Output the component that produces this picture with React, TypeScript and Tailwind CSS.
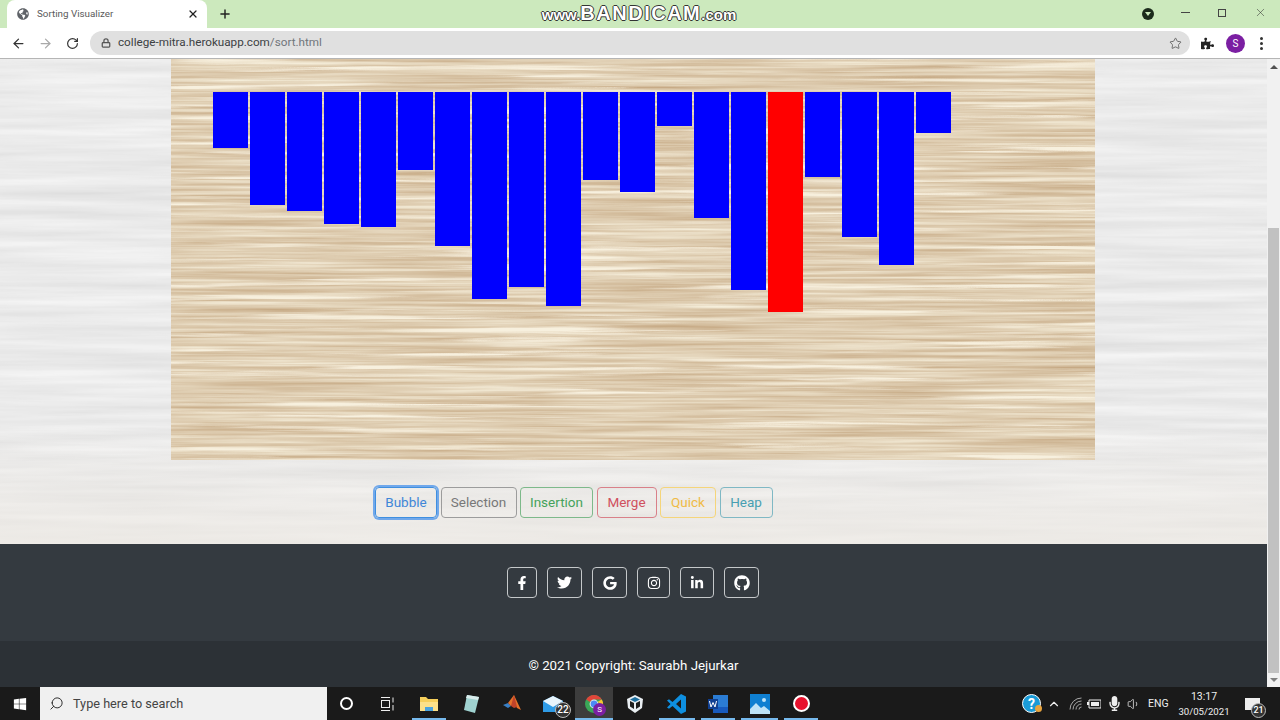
import { ArrowLeft, ArrowRight, ChevronUp, Lock, Plus, RotateCw, Search, Star, Volume1, X } from 'lucide-react';
import { ReactNode } from 'react';
import {
  FaFacebookF,
  FaGithub,
  FaGlobeAmericas,
  FaGoogle,
  FaInstagram,
  FaLinkedinIn,
  FaMicrophone,
  FaPuzzlePiece,
  FaTwitter,
  FaWindows,
} from 'react-icons/fa';

// bottom edge of each bar, measured from the top of the window
const bars = [148, 205, 211, 224, 227, 170, 246, 299, 287, 306, 180, 192, 126, 218, 290, 312, 177, 237, 265, 133];
const activeBar = 15;

const sortButtons = [
  { label: 'Bubble', cls: 'w-[62px] border-[#3f8fe0] text-[#3f86d8] shadow-[0_0_0_2px_rgba(60,140,235,0.7)]' },
  { label: 'Selection', cls: 'w-[76px] border-[#9c9c9c] text-[#787878]' },
  { label: 'Insertion', cls: 'w-[73px] border-[#7db98a] text-[#45a25c]' },
  { label: 'Merge', cls: 'w-[60px] border-[#d98089] text-[#d0505e]' },
  { label: 'Quick', cls: 'w-[56px] border-[#f5d57a] text-[#f0bb45]' },
  { label: 'Heap', cls: 'w-[53px] border-[#7fb8c4] text-[#479fb2]' },
];

const socials = [
  { icon: <FaFacebookF size={14} />, w: 'w-[30px]' },
  { icon: <FaTwitter size={15} />, w: 'w-[35px]' },
  { icon: <FaGoogle size={14} />, w: 'w-[35px]' },
  { icon: <FaInstagram size={14} />, w: 'w-[33px]' },
  { icon: <FaLinkedinIn size={14} />, w: 'w-[34px]' },
  { icon: <FaGithub size={16} />, w: 'w-[35px]' },
];

const Grain = ({ id, freq, seed, matrix }: { id: string; freq: string; seed: number; matrix: string }) => (
  <svg className="absolute inset-0 w-full h-full" aria-hidden="true">
    <filter id={id} x="0" y="0" width="100%" height="100%" colorInterpolationFilters="sRGB">
      <feTurbulence type="fractalNoise" baseFrequency={freq} numOctaves={4} seed={seed} />
      <feColorMatrix type="matrix" values={matrix} />
    </filter>
    <rect width="100%" height="100%" filter={`url(#${id})`} />
  </svg>
);

const TaskIcon = ({ w, open, children }: { w: string; open?: boolean; children: ReactNode }) => (
  <div className={`relative h-full flex items-center justify-center ${w}`}>
    {children}
    {open && <div className="absolute bottom-0 left-[3px] right-[3px] h-[2px] bg-[#76b9ed]" />}
  </div>
);

const TaskView = () => (
  <svg width="15" height="14" viewBox="0 0 15 14" fill="none" stroke="#eee">
    <path d="M1 .5h9M1 13.500h9M13 .5v5M13 8v5.500" />
    <rect x="1.500" y="3.500" width="8" height="7" />
  </svg>
);

const Explorer = () => (
  <svg width="20" height="18" viewBox="0 0 20 18">
    <path d="M1 2h6l2 2h10v12H1z" fill="#f6cf5b" />
    <path d="M1 7h18v9H1z" fill="#fbe08a" />
    <path d="M6 12h8v4H6z" fill="#4aa3df" />
  </svg>
);

const Notes = () => (
  <svg width="18" height="20" viewBox="0 0 18 20">
    <path d="M5 1l12 2-4 16-11-3z" fill="#9fd2d0" />
    <path d="M5 1l12 2-1 3-12-2z" fill="#d9ecec" />
  </svg>
);

const Matlab = () => (
  <svg width="20" height="20" viewBox="0 0 20 20">
    <path d="M1 11l5-2 3 3-3 2z" fill="#3a7fc4" />
    <path d="M6 9l6-8 7 15-4-2-3-5-3 3z" fill="#e5712a" />
    <path d="M12 1l-3 11 3 2 3-1z" fill="#c0432a" />
  </svg>
);

const Mail = () => (
  <svg width="20" height="16" viewBox="0 0 20 16">
    <path d="M0 5l10-5 10 5v11H0z" fill="#2f9be6" />
    <path d="M0 5l10 6 10-6-10-5z" fill="#e8f4fc" />
  </svg>
);

const Chrome = () => (
  <svg width="20" height="20" viewBox="0 0 20 20">
    <circle cx="10" cy="10" r="9" fill="#3aa757" />
    <path d="M2.200 5.500a9 9 0 0 1 15.600 0H10a4.500 4.500 0 0 0-4 2.500z" fill="#e0463a" />
    <path d="M17.800 5.500A9 9 0 0 1 10 19l4-6.900A4.500 4.500 0 0 0 14 7.500z" fill="#f7c531" />
    <circle cx="10" cy="10" r="4.400" fill="#eee" />
    <circle cx="10" cy="10" r="3.400" fill="#4c8bf5" />
  </svg>
);

const VirtualBox = () => (
  <svg width="18" height="20" viewBox="0 0 18 20">
    <path d="M9 1l8 4-1 9-7 5-7-5-1-9z" fill="#e9eef2" />
    <path d="M9 3l5 2.500-5 2.500-5-2.500z" fill="#1c6f9f" />
    <path d="M4 7l4 2v6l-4-2.500zM14 7l-4 2v6l4-2.500z" fill="#1d1d1d" />
  </svg>
);

const VsCode = () => (
  <svg width="20" height="20" viewBox="0 0 20 20">
    <path d="M14 0l5 2.500v15L14 20 5.500 12 2 14.800 0 13.500 3.500 10 0 6.500l2-1.300L5.500 8zM14 5.500L9 10l5 4.500z" fill="#0e8fe0" />
  </svg>
);

const Word = () => (
  <svg width="20" height="18" viewBox="0 0 20 18">
    <path d="M5 0h15v18H5z" fill="#2b7cd3" />
    <path d="M5 12h15v6H5z" fill="#185abd" />
    <path d="M0 4h10v10H0z" fill="#103f91" />
    <path d="M1.500 6l1.500 6 2-4.500L7 12l1.500-6" fill="none" stroke="#fff" strokeWidth="1" />
  </svg>
);

const Photos = () => (
  <svg width="20" height="20" viewBox="0 0 20 20">
    <path d="M0 0h20v20H0z" fill="#0f7fd1" />
    <path d="M0 15l6-6 5 5 3-2 6 5v3H0z" fill="#bfe3f7" />
    <circle cx="14" cy="6" r="2" fill="#bfe3f7" />
  </svg>
);

const Help = () => (
  <div className="relative w-[19px] h-[19px] rounded-full bg-[#1a9bd7] border border-white flex items-center justify-center text-white text-[14px] font-bold leading-none">
    ?
    <div className="absolute -right-[2px] bottom-0 w-[7px] h-[7px] rounded-full bg-[#e8a33d]" />
  </div>
);

const Signal = () => (
  <svg width="13" height="13" viewBox="0 0 13 13" fill="none" stroke="#aaa" strokeWidth="1">
    <path d="M1 12.500a11.500 11.500 0 0 1 11.500-11.500M4 12.500a8.500 8.500 0 0 1 8.500-8.500M7 12.500a5.500 5.500 0 0 1 5.500-5.500M10 12.500a2.500 2.500 0 0 1 2.500-2.500" />
  </svg>
);

const Battery = () => (
  <svg width="14" height="10" viewBox="0 0 14 10">
    <path d="M2 1h12v8H2z" fill="none" stroke="#eee" />
    <path d="M4 3h8v4H4zM0 3h2v3H0z" fill="#eee" />
  </svg>
);

export default function App() {
  return (
    <div className="relative w-[1280px] h-[720px] flex flex-col overflow-hidden bg-white font-['Roboto',sans-serif]">
      {/* tab strip */}
      <div className="relative h-[28px] shrink-0 flex items-end bg-[#cce9bd]">
        <div className="ml-[7px] w-[200px] h-[28px] rounded-t-[8px] bg-white flex items-center pl-[10px] pr-[8px]">
          <FaGlobeAmericas size={12} className="text-[#5f6368]" />
          <span className="ml-[8px] text-[9.8px] text-[#5a5a5a] leading-none">Sorting Visualizer</span>
          <X size={12} strokeWidth={2.5} className="ml-auto text-[#222]" />
        </div>
        <Plus size={14} strokeWidth={2.5} className="ml-[11px] mb-[7px] text-[#222]" />
        <div className="absolute left-[530px] top-[3px] w-[218px] text-center text-white font-bold leading-[20px] [text-shadow:1px_0_0_#333,-1px_0_0_#333,0_1px_0_#333,0_-1px_0_#333] font-['Liberation_Sans',sans-serif]">
          <span className="text-[15px]">www.</span>
          <span className="text-[20px] tracking-[1.5px]">BANDICAM</span>
          <span className="text-[15px]">.com</span>
        </div>
        <div className="absolute left-[1142px] top-[8px] w-[12px] h-[12px] rounded-full bg-[#1c2b1c] flex items-center justify-center">
          <div className="w-0 h-0 border-l-[3px] border-r-[3px] border-t-[4px] border-l-transparent border-r-transparent border-t-[#cce9bd]" />
        </div>
        <div className="absolute left-[1181px] top-[12px] w-[9px] h-px bg-[#444]" />
        <div className="absolute left-[1218px] top-[9px] w-[8px] h-[8px] border border-[#444]" />
        <X size={13} strokeWidth={1} className="absolute left-[1254px] top-[6px] text-[#333]" />
      </div>

      {/* toolbar */}
      <div className="h-[31px] shrink-0 flex items-center bg-white border-b border-[#b5b5b5]">
        <ArrowLeft size={15} strokeWidth={2} className="ml-[11px] text-[#333]" />
        <ArrowRight size={15} strokeWidth={2} className="ml-[12px] text-[#a9a9a9]" />
        <RotateCw size={13} strokeWidth={2.2} className="ml-[13px] text-[#333]" />
        <div className="ml-[11px] w-[1100px] h-[24px] rounded-full bg-[#e0e0e0] flex items-center pl-[11px] pr-[8px]">
          <Lock size={10} strokeWidth={3} className="text-[#555]" />
          <span className="ml-[7px] text-[11.7px] leading-none text-[#3c4043]">
            college-mitra.herokuapp.com<span className="text-[#70757a]">/sort.html</span>
          </span>
          <Star size={13} strokeWidth={1.5} className="ml-auto text-[#555]" />
        </div>
        <FaPuzzlePiece size={13} className="ml-[11px] text-[#222]" />
        <div className="ml-[12px] w-[19px] h-[19px] rounded-full bg-[#7b1fa2] text-white text-[10px] flex items-center justify-center">S</div>
        <div className="ml-[15px] flex flex-col gap-[2px]">
          <div className="w-[3px] h-[3px] rounded-full bg-[#333]" />
          <div className="w-[3px] h-[3px] rounded-full bg-[#333]" />
          <div className="w-[3px] h-[3px] rounded-full bg-[#333]" />
        </div>
      </div>

      {/* page + scrollbar */}
      <div className="flex-1 min-h-0 flex">
        <div className="w-[1267px] flex flex-col">
          <div className="relative h-[485px] shrink-0 overflow-hidden bg-[#ececec]">
            <Grain id="marble" freq="0.004 0.1" seed={7} matrix="0.12 0 0 0 0.86  0.12 0 0 0 0.86  0.12 0 0 0 0.86  0 0 0 0 1" />
            <div className="absolute inset-x-0 bottom-0 h-[120px] bg-gradient-to-b from-transparent to-[#eeeae4]/70" />
            <div className="relative ml-[171px] w-[924px] h-[401px] overflow-hidden">
              <Grain id="wood" freq="0.005 0.3" seed={3} matrix="0.22 0 0 0 0.76  0.32 0 0 0 0.64  0.4 0 0 0 0.49  0 0 0 0 1" />
              <Grain id="streak" freq="0.004 0.16" seed={11} matrix="0 0 0 0 0.97  0 0 0 0 0.94  0 0 0 0 0.87  5 0 0 0 -2.9" />
              <div className="relative pl-[42px] pt-[33px] flex items-start gap-[2px]">
                {bars.map((bottom, i) => (
                  <div
                    key={i}
                    className={`w-[35px] ${i === activeBar ? 'bg-[#ff0000]' : 'bg-[#0000ff]'}`}
                    style={{ height: bottom - 92 }}
                  />
                ))}
              </div>
            </div>
            <div className="relative mt-[27px] ml-[375px] flex gap-[3.5px]">
              {sortButtons.map((b) => (
                <button
                  key={b.label}
                  className={`h-[31px] pt-[1px] rounded-[4px] border text-[13.5px] leading-none flex items-center justify-center ${b.cls}`}
                >
                  {b.label}
                </button>
              ))}
            </div>
          </div>

          <div className="h-[97px] shrink-0 bg-[#343a40] pt-[23px] pl-[507px] flex items-start gap-[10px]">
            {socials.map((s, i) => (
              <div key={i} className={`${s.w} h-[31px] rounded-[4px] border border-[#c5c8ca] text-white flex items-center justify-center`}>
                {s.icon}
              </div>
            ))}
          </div>
          <div className="flex-1 bg-[#2c3136] flex items-center justify-center pt-[3px] text-white text-[13.3px]">
            © 2021 Copyright: Saurabh Jejurkar
          </div>
        </div>

        <div className="flex-1 bg-[#f1f1f1] flex flex-col items-center">
          <div className="mt-[6px] w-0 h-0 border-l-[4px] border-r-[4px] border-b-[4px] border-l-transparent border-r-transparent border-b-[#505050]" />
          <div className="mt-[159px] w-[11px] h-[445px] bg-[#c1c1c1]" />
          <div className="mt-[5px] w-0 h-0 border-l-[4px] border-r-[4px] border-t-[4px] border-l-transparent border-r-transparent border-t-[#808080]" />
        </div>
      </div>

      {/* windows taskbar */}
      <div className="h-[33px] shrink-0 flex items-center bg-[#1a1a1a] text-[#eee]">
        <div className="w-[40px] flex justify-center">
          <FaWindows size={14} className="text-white" />
        </div>
        <div className="w-[287px] h-full bg-[#f0f0f0] flex items-center pl-[9px]">
          <Search size={15} strokeWidth={1.5} className="text-[#222] -scale-x-100" />
          <span className="ml-[9px] text-[12.7px] text-[#444]">Type here to search</span>
        </div>
        <div className="ml-[13px] w-[13px] h-[13px] rounded-full border-[2px] border-white" />
        <div className="ml-[27px] w-[15px] flex">
          <TaskView />
        </div>
        <div className="ml-[14px] h-full flex items-center">
          <TaskIcon w="w-[40px]" open>
            <Explorer />
          </TaskIcon>
          <TaskIcon w="w-[44px]">
            <Notes />
          </TaskIcon>
          <TaskIcon w="w-[38px]">
            <Matlab />
          </TaskIcon>
          <div className="relative w-[44px] h-full flex items-center justify-center">
            <Mail />
            <div className="absolute left-[24px] top-[15px] w-[16px] h-[16px] rounded-full bg-[#333] border border-[#bbb] text-white text-[10px] font-medium leading-none flex items-center justify-center">22</div>
          </div>
          <div className="relative w-[38px] h-full bg-[#3d3d3d] flex items-center justify-center">
            <Chrome />
            <div className="absolute left-[18px] top-[16px] w-[13px] h-[13px] rounded-full bg-[#7b1fa2] text-white text-[8px] leading-none flex items-center justify-center">S</div>
            <div className="absolute bottom-0 inset-x-0 h-[2px] bg-[#76b9ed]" />
          </div>
          <TaskIcon w="w-[43px]">
            <VirtualBox />
          </TaskIcon>
          <TaskIcon w="w-[42px]" open>
            <VsCode />
          </TaskIcon>
          <TaskIcon w="w-[40px]" open>
            <Word />
          </TaskIcon>
          <TaskIcon w="w-[43px]" open>
            <Photos />
          </TaskIcon>
          <TaskIcon w="w-[40px]" open>
            <div className="w-[17px] h-[17px] rounded-full border-2 border-white bg-[#e8112d]" />
          </TaskIcon>
        </div>
        <div className="ml-[201px] flex items-center">
          <Help />
          <ChevronUp size={14} className="ml-[6px]" />
          <div className="ml-[8px] flex">
            <Signal />
          </div>
          <div className="ml-[5px]">
            <Battery />
          </div>
          <FaMicrophone size={15} className="ml-[6px]" />
          <Volume1 size={14} strokeWidth={1.3} className="ml-[5px]" />
          <span className="ml-[7px] text-[10.5px] w-[22px]">ENG</span>
          <div className="ml-[6px] w-[56px] text-center text-[9.6px] leading-[15px]">
            <div className="text-[10.5px]">13:17</div>
            <div>30/05/2021</div>
          </div>
          <div className="relative ml-[13px] w-[15px] h-[12px] bg-[#eee]">
            <div className="absolute -right-[6px] top-[5px] w-[15px] h-[15px] rounded-full bg-[#333] border border-[#bbb] text-white text-[9px] font-medium leading-none flex items-center justify-center">21</div>
          </div>
        </div>
      </div>
    </div>
  );
}
